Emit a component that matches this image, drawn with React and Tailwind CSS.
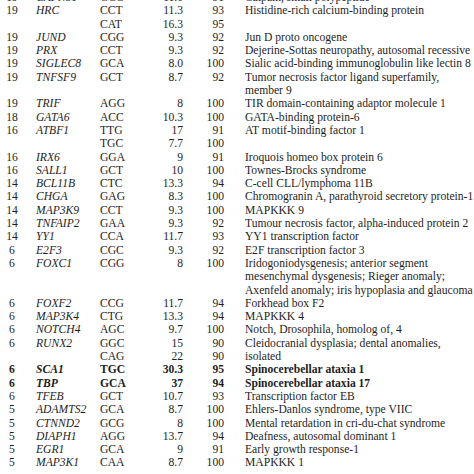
import React from 'react';

// one entry per printed line: [chromosome, gene, codon, length, percent, description, bold]
const rows = [
  ['19', 'CAPNS1', 'GCC', '11.0', '91', 'Calpain, small polypeptide'],
  ['19', 'HRC', 'CCT', '11.3', '93', 'Histidine-rich calcium-binding protein'],
  ['', '', 'CAT', '16.3', '95', ''],
  ['19', 'JUND', 'CGG', '9.3', '92', 'Jun D proto oncogene'],
  ['19', 'PRX', 'CCT', '9.3', '92', 'Dejerine-Sottas neuropathy, autosomal recessive'],
  ['19', 'SIGLEC8', 'GCA', '8.0', '100', 'Sialic acid-binding immunoglobulin like lectin 8'],
  ['19', 'TNFSF9', 'GCT', '8.7', '92', 'Tumor necrosis factor ligand superfamily,'],
  ['', '', '', '', '', 'member 9'],
  ['19', 'TRIF', 'AGG', '8', '100', 'TIR domain-containing adaptor molecule 1'],
  ['18', 'GATA6', 'ACC', '10.3', '100', 'GATA-binding protein-6'],
  ['16', 'ATBF1', 'TTG', '17', '91', 'AT motif-binding factor 1'],
  ['', '', 'TGC', '7.7', '100', ''],
  ['16', 'IRX6', 'GGA', '9', '91', 'Iroquois homeo box protein 6'],
  ['16', 'SALL1', 'GCT', '10', '100', 'Townes-Brocks syndrome'],
  ['14', 'BCL11B', 'CTC', '13.3', '94', 'C-cell CLL/lymphoma 11B'],
  ['14', 'CHGA', 'GAG', '8.3', '100', 'Chromogranin A, parathyroid secretory protein-1'],
  ['14', 'MAP3K9', 'CCT', '9.3', '100', 'MAPKKK 9'],
  ['14', 'TNFAIP2', 'GAA', '9.3', '92', 'Tumour necrosis factor, alpha-induced protein 2'],
  ['14', 'YY1', 'CCA', '11.7', '93', 'YY1 transcription factor'],
  ['6', 'E2F3', 'CGC', '9.3', '92', 'E2F transcription factor 3'],
  ['6', 'FOXC1', 'CGG', '8', '100', 'Iridogoniodysgenesis; anterior segment'],
  ['', '', '', '', '', 'mesenchymal dysgenesis; Rieger anomaly;'],
  ['', '', '', '', '', 'Axenfeld anomaly; iris hypoplasia and glaucoma'],
  ['6', 'FOXF2', 'CCG', '11.7', '94', 'Forkhead box F2'],
  ['6', 'MAP3K4', 'CTG', '13.3', '94', 'MAPKKK 4'],
  ['6', 'NOTCH4', 'AGC', '9.7', '100', 'Notch, Drosophila, homolog of, 4'],
  ['6', 'RUNX2', 'GGC', '15', '90', 'Cleidocranial dysplasia; dental anomalies,'],
  ['', '', 'CAG', '22', '90', 'isolated'],
  ['6', 'SCA1', 'TGC', '30.3', '95', 'Spinocerebellar ataxia 1', true],
  ['6', 'TBP', 'GCA', '37', '94', 'Spinocerebellar ataxia 17', true],
  ['6', 'TFEB', 'GCT', '10.7', '93', 'Transcription factor EB'],
  ['5', 'ADAMTS2', 'GCA', '8.7', '100', 'Ehlers-Danlos syndrome, type VIIC'],
  ['5', 'CTNND2', 'GCG', '8', '100', 'Mental retardation in cri-du-chat syndrome'],
  ['5', 'DIAPH1', 'AGG', '13.7', '94', 'Deafness, autosomal dominant 1'],
  ['5', 'EGR1', 'GCA', '9', '91', 'Early growth response-1'],
  ['5', 'MAP3K1', 'CAA', '8.7', '100', 'MAPKKK 1'],
];

const App = () => {
  return (
    <div className="w-[474px] h-[474px] overflow-hidden bg-white text-[#1e1e1e]">
      <div
        className="-mt-[9px] flex flex-col text-[11.6px] leading-[13.31px] whitespace-nowrap"
        style={{ fontFamily: '"Liberation Serif", "Times New Roman", serif' }}
      >
        {rows.map((r, i) => (
          <div
            key={i}
            className={`grid grid-cols-[24px_76px_52px_31px_41px_1fr] h-[13.31px] ${r[6] ? 'font-bold' : ''}`}
          >
            <div className="text-center">{r[0]}</div>
            <div className="pl-[12px] italic">{r[1]}</div>
            <div>{r[2]}</div>
            <div className="text-right">{r[3]}</div>
            <div className="text-right">{r[4]}</div>
            <div className="pl-[21px]">{r[5]}</div>
          </div>
        ))}
      </div>
    </div>
  );
};

export default App;
